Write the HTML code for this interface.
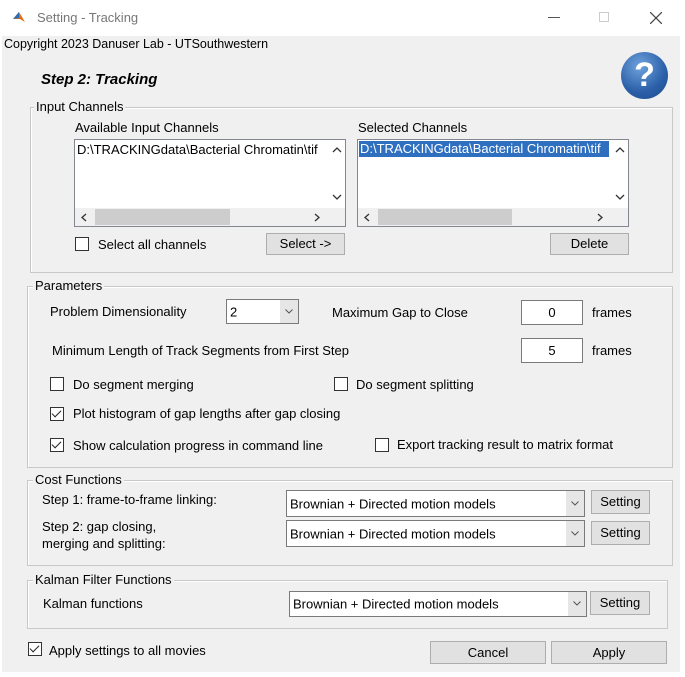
<!DOCTYPE html>
<html><head><style>
*{box-sizing:border-box;margin:0;padding:0}
body{width:685px;height:677px;background:#fff;font-family:"Liberation Sans",Arial,sans-serif;font-size:13px;color:#000;position:relative;overflow:hidden}
.a{position:absolute;white-space:nowrap}
.body{position:absolute;left:2px;top:36px;width:678px;height:636px;background:#f0f0f0}
.fs{position:absolute;border:1px solid #c8c8c8;box-shadow:inset 1px 1px 0 #fff}
.lg{position:absolute;background:#f0f0f0;padding:0 2px;line-height:14px}
.lb{position:absolute;background:#fff;border:1px solid #828790}
.btn{position:absolute;background:#e1e1e1;border:1px solid #adadad;text-align:center;font-size:13px}
.cb{position:absolute;width:14px;height:14px;border:1px solid #333;background:#fff}
.cb.c::after{content:"";position:absolute;left:3px;top:0px;width:4px;height:8px;border:solid #222;border-width:0 1.5px 1.5px 0;transform:rotate(45deg)}
.tb{position:absolute;background:#fff;border:1px solid #7a7a7a;text-align:center}
.dd{position:absolute;background:#fff;border:1px solid #7a7a7a}
.dd .ar{position:absolute;right:0;top:0;bottom:0;width:18px;background:#e6e6e6}
.dd .ar svg{position:absolute;left:5px;top:50%;margin-top:-3px}
.dd .t{position:absolute;left:3px;top:50%;transform:translateY(-50%)}
.sv{position:absolute}
</style></head><body>
<div class="a" style="left:12px;top:10px;width:14px;height:14px">
<svg width="14" height="14"><polygon points="1,9 7,2 13,12 8,9" fill="#e06a10"/><polygon points="1,9 7,2 7,8" fill="#2d6db5"/></svg></div>
<div class="a" style="left:37px;top:10px;color:#777;font-size:13px">Setting - Tracking</div>
<div class="a" style="left:548px;top:17px;width:12px;height:1px;background:#555"></div>
<div class="a" style="left:599px;top:12px;width:10px;height:10px;border:1px solid #ccc"></div>
<svg class="sv" style="left:650px;top:12px" width="12" height="12"><path d="M0 0L12 12M12 0L0 12" stroke="#444" stroke-width="1.2"/></svg>
<div class="body"></div>
<div class="a" style="left:4px;top:37px;font-size:12.5px">Copyright 2023 Danuser Lab - UTSouthwestern</div>
<div class="a" style="left:621px;top:52px;width:47px;height:47px;border-radius:50%;background:radial-gradient(circle at 40% 30%,#6fa3dd,#2a5fa8 60%,#1d4a8a);color:#fff;font-size:34px;font-weight:bold;text-align:center;line-height:47px">?</div>
<div class="a" style="left:41px;top:71px;font-size:15px;font-weight:bold;font-style:italic">Step 2: Tracking</div>

<div class="fs" style="left:30px;top:107px;width:643px;height:166px"></div>
<div class="lg" style="left:34px;top:100px">Input Channels</div>
<div class="a" style="left:75px;top:120px">Available Input Channels</div>
<div class="lb" style="left:74px;top:139px;width:272px;height:88px">
<div class="a" style="left:2px;top:2px">D:\TRACKINGdata\Bacterial Chromatin\tif</div>
<div class="a" style="left:254px;top:0;width:16px;height:68px;background:#fff"></div>
<svg class="sv" style="left:257px;top:7px" width="10" height="6"><path d="M1 5L5 1L9 5" fill="none" stroke="#333" stroke-width="1.3"/></svg>
<svg class="sv" style="left:257px;top:54px" width="10" height="6"><path d="M1 1L5 5L9 1" fill="none" stroke="#333" stroke-width="1.3"/></svg>
<div class="a" style="left:0;top:68px;width:270px;height:18px;background:#f0f0f0"><div class="a" style="left:20px;top:1px;width:135px;height:16px;background:#cdcdcd"></div>
<svg class="sv" style="left:6px;top:5px" width="6" height="9"><path d="M5 1L1 4.5L5 8" fill="none" stroke="#333" stroke-width="1.3"/></svg>
<svg class="sv" style="left:239px;top:5px" width="6" height="9"><path d="M1 1L5 4.5L1 8" fill="none" stroke="#333" stroke-width="1.3"/></svg></div></div>
<div class="a" style="left:358px;top:120px">Selected Channels</div>
<div class="lb" style="left:357px;top:139px;width:272px;height:88px">
<div class="a" style="left:1px;top:1px;width:250px;height:16px;background:#2f6fc0;color:#fff;padding-left:1px">D:\TRACKINGdata\Bacterial Chromatin\tif</div>
<div class="a" style="left:254px;top:0;width:16px;height:68px;background:#fff"></div>
<svg class="sv" style="left:257px;top:7px" width="10" height="6"><path d="M1 5L5 1L9 5" fill="none" stroke="#333" stroke-width="1.3"/></svg>
<svg class="sv" style="left:257px;top:54px" width="10" height="6"><path d="M1 1L5 5L9 1" fill="none" stroke="#333" stroke-width="1.3"/></svg>
<div class="a" style="left:0;top:68px;width:270px;height:18px;background:#f0f0f0"><div class="a" style="left:20px;top:1px;width:134px;height:16px;background:#cdcdcd"></div>
<svg class="sv" style="left:6px;top:5px" width="6" height="9"><path d="M5 1L1 4.5L5 8" fill="none" stroke="#333" stroke-width="1.3"/></svg>
<svg class="sv" style="left:239px;top:5px" width="6" height="9"><path d="M1 1L5 4.5L1 8" fill="none" stroke="#333" stroke-width="1.3"/></svg></div></div>
<div class="cb" style="left:75px;top:237px"></div>
<div class="a" style="left:98px;top:237px">Select all channels</div>
<div class="btn" style="left:266px;top:233px;width:79px;height:22px;line-height:20px">Select -&gt;</div>
<div class="btn" style="left:550px;top:233px;width:79px;height:22px;line-height:20px">Delete</div>

<div class="fs" style="left:27px;top:286px;width:646px;height:182px"></div>
<div class="lg" style="left:33px;top:279px">Parameters</div>
<div class="a" style="left:50px;top:304px">Problem Dimensionality</div>
<div class="dd" style="left:226px;top:299px;width:73px;height:25px"><span class="t">2</span><span class="ar"><svg width="8" height="5"><path d="M0.5 0.5L4 4L7.5 0.5" fill="none" stroke="#555"/></svg></span></div>
<div class="a" style="left:332px;top:305px">Maximum Gap to Close</div>
<div class="tb" style="left:521px;top:300px;width:62px;height:25px;line-height:23px">0</div>
<div class="a" style="left:592px;top:305px">frames</div>
<div class="a" style="left:52px;top:343px">Minimum Length of Track Segments from First Step</div>
<div class="tb" style="left:521px;top:338px;width:62px;height:25px;line-height:23px">5</div>
<div class="a" style="left:592px;top:343px">frames</div>
<div class="cb" style="left:50px;top:377px"></div><div class="a" style="left:73px;top:377px">Do segment merging</div>
<div class="cb" style="left:334px;top:377px"></div><div class="a" style="left:356px;top:377px">Do segment splitting</div>
<div class="cb c" style="left:50px;top:407px"></div><div class="a" style="left:73px;top:406px">Plot histogram of gap lengths after gap closing</div>
<div class="cb c" style="left:50px;top:438px"></div><div class="a" style="left:73px;top:438px">Show calculation progress in command line</div>
<div class="cb" style="left:375px;top:438px"></div><div class="a" style="left:397px;top:437px">Export tracking result to matrix format</div>

<div class="fs" style="left:27px;top:480px;width:646px;height:86px"></div>
<div class="lg" style="left:33px;top:473px">Cost Functions</div>
<div class="a" style="left:42px;top:492px">Step 1: frame-to-frame linking:</div>
<div class="dd" style="left:286px;top:490px;width:299px;height:27px"><span class="t">Brownian + Directed motion models</span><span class="ar"><svg width="8" height="5"><path d="M0.5 0.5L4 4L7.5 0.5" fill="none" stroke="#555"/></svg></span></div>
<div class="btn" style="left:591px;top:490px;width:59px;height:24px;line-height:22px">Setting</div>
<div class="a" style="left:42px;top:518px;line-height:17px">Step 2: gap closing,<br>merging and splitting:</div>
<div class="dd" style="left:286px;top:520px;width:299px;height:27px"><span class="t">Brownian + Directed motion models</span><span class="ar"><svg width="8" height="5"><path d="M0.5 0.5L4 4L7.5 0.5" fill="none" stroke="#555"/></svg></span></div>
<div class="btn" style="left:591px;top:521px;width:59px;height:24px;line-height:22px">Setting</div>

<div class="fs" style="left:27px;top:580px;width:641px;height:49px"></div>
<div class="lg" style="left:33px;top:573px">Kalman Filter Functions</div>
<div class="a" style="left:43px;top:596px">Kalman functions</div>
<div class="dd" style="left:289px;top:591px;width:298px;height:26px"><span class="t">Brownian + Directed motion models</span><span class="ar"><svg width="8" height="5"><path d="M0.5 0.5L4 4L7.5 0.5" fill="none" stroke="#555"/></svg></span></div>
<div class="btn" style="left:590px;top:591px;width:60px;height:24px;line-height:22px">Setting</div>

<div class="cb c" style="left:28px;top:642px"></div>
<div class="a" style="left:49px;top:643px">Apply settings to all movies</div>
<div class="btn" style="left:430px;top:641px;width:116px;height:23px;line-height:21px">Cancel</div>
<div class="btn" style="left:551px;top:641px;width:116px;height:23px;line-height:21px">Apply</div>
</body></html>
